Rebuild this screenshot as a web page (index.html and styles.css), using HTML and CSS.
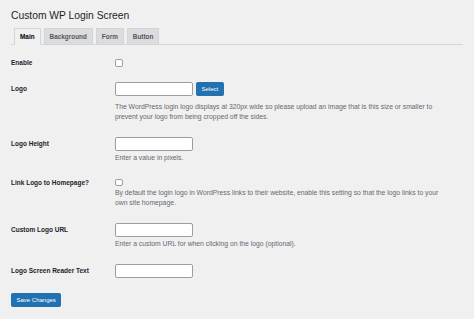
FILE: index.html
```html
<!DOCTYPE html>
<html lang="en">
<head>
  <meta charset="UTF-8" />
  <meta name="viewport" content="width=device-width, initial-scale=1.0"/>
  <title>Custom WP Login Screen</title>
  <link rel="stylesheet" href="styles.css">
</head>
<body>

  <div class="wrap">
    <h1>Custom WP Login Screen</h1>

    <nav class="nav-tabs">
      <a href="#" class="tab active">Main</a>
      <a href="#" class="tab">Background</a>
      <a href="#" class="tab">Form</a>
      <a href="#" class="tab">Button</a>
    </nav>

    <form class="settings">
      <div class="row row-check">
        <label class="row-label" for="enable">Enable</label>
        <div class="field">
          <div class="line"><input type="checkbox" id="enable" class="checkbox"></div>
        </div>
      </div>

      <div class="row">
        <label class="row-label" for="logo">Logo</label>
        <div class="field">
          <div class="line">
            <input type="text" id="logo" class="text-input">
            <button type="button" class="btn btn-primary">Select</button>
          </div>
          <p class="description desc-logo">The WordPress login logo displays at 320px wide so please upload an image that is this size or smaller to prevent your logo from being cropped off the sides.</p>
        </div>
      </div>

      <div class="row">
        <label class="row-label" for="logo-height">Logo Height</label>
        <div class="field">
          <div class="line"><input type="text" id="logo-height" class="text-input"></div>
          <p class="description">Enter a value in pixels.</p>
        </div>
      </div>

      <div class="row row-check">
        <label class="row-label" for="link-home">Link Logo to Homepage?</label>
        <div class="field">
          <div class="line"><input type="checkbox" id="link-home" class="checkbox"></div>
          <p class="description">By default the login logo in WordPress links to their website, enable this setting so that the logo links to your own site homepage.</p>
        </div>
      </div>

      <div class="row">
        <label class="row-label" for="logo-url">Custom Logo URL</label>
        <div class="field">
          <div class="line"><input type="text" id="logo-url" class="text-input"></div>
          <p class="description">Enter a custom URL for when clicking on the logo (optional).</p>
        </div>
      </div>

      <div class="row">
        <label class="row-label" for="reader-text">Logo Screen Reader Text</label>
        <div class="field">
          <div class="line"><input type="text" id="reader-text" class="text-input"></div>
        </div>
      </div>

      <div class="submit">
        <button type="submit" class="btn btn-primary btn-save">Save Changes</button>
      </div>
    </form>
  </div>

</body>
</html>
```

FILE: styles.css
```css
:root {
  --bg-color: #f0f0f1;
  --text-color: #1d2327;
  --muted: #646970;
  --border: #c3c4c7;
  --input-border: #9a9da2;
  --blue: #2271b1;
}

body {
  font-family: 'Liberation Sans', Arial, sans-serif;
  background-color: var(--bg-color);
  color: var(--text-color);
  margin: 0;
}

.wrap {
  padding: 9px 11px 0 11px;
}

h1 {
  margin: 0;
  font-size: 10.3px;
  line-height: 14px;
  font-weight: 400;
  color: var(--text-color);
}

.nav-tabs {
  display: flex;
  align-items: flex-end;
  gap: 3px;
  margin-top: 5px;
  padding-left: 3px;
  border-bottom: 1px solid #d6d7d9;
}

.tab {
  display: block;
  margin-bottom: -1px;
  padding: 2px 5px;
  line-height: 11px;
  font-size: 6.4px;
  font-weight: bold;
  color: #50575e;
  text-decoration: none;
  background-color: #dcdcde;
  border: 1px solid #d3d4d6;
}

.tab.active {
  color: #000;
  background-color: var(--bg-color);
  border-bottom-color: var(--bg-color);
}

.settings {
  margin-top: 6px;
}

.row {
  display: grid;
  grid-template-columns: 104px 1fr;
  padding: 7px 0;
}

.row-label {
  font-size: 6.5px;
  font-weight: bold;
  line-height: 14px;
  color: var(--text-color);
}

.row-check .row-label {
  line-height: 10px;
}

.line {
  display: flex;
  align-items: center;
  gap: 3px;
  height: 14px;
}

.row-check .line {
  height: 10px;
}

.text-input {
  box-sizing: border-box;
  width: 78px;
  height: 14px;
  margin: 0;
  padding: 0 3px;
  background: #fff;
  border: 1px solid var(--input-border);
  border-radius: 2px;
  font-size: 6px;
}

.checkbox {
  appearance: none;
  box-sizing: border-box;
  width: 7.5px;
  height: 7.5px;
  margin: 0;
  background: #fff;
  border: 1px solid var(--input-border);
  border-radius: 2px;
}

.description {
  margin: 2.5px 0 0;
  max-width: 332px;
  font-size: 6.8px;
  line-height: 10.5px;
  color: var(--muted);
}

.desc-logo {
  margin-top: 5.5px;
}

.row-check .description {
  margin-top: 0;
}

.btn {
  box-sizing: border-box;
  height: 14px;
  margin: 0;
  padding: 0 4.5px;
  font-family: inherit;
  font-size: 6px;
  line-height: 12px;
  border-radius: 1.5px;
  cursor: pointer;
}

.btn-primary {
  background-color: var(--blue);
  border: 1px solid var(--blue);
  color: #fff;
}

.submit {
  padding: 3px 0 13px;
}
```
